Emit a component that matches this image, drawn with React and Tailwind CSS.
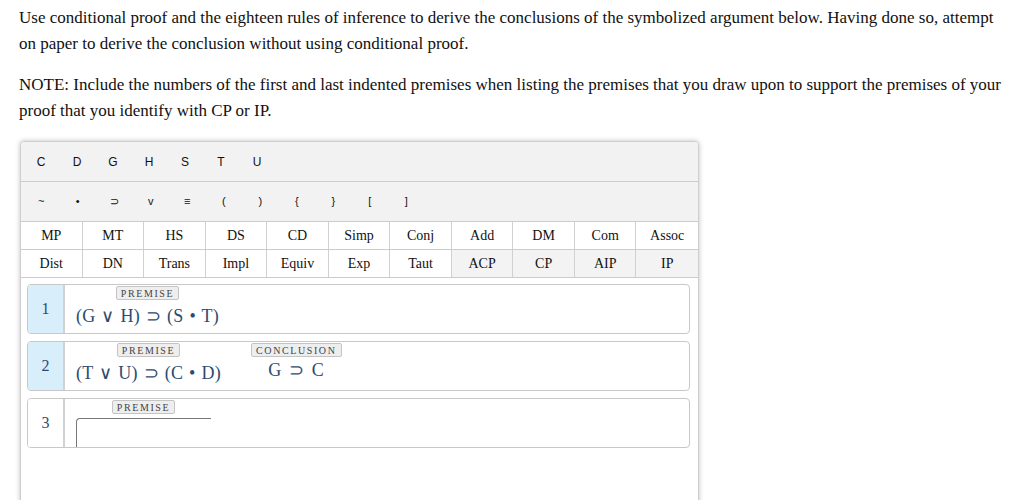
const vars = ['C', 'D', 'G', 'H', 'S', 'T', 'U'];
const symbols = ['~', '•', '⊃', 'v', '≡', '(', ')', '{', '}', '[', ']'];
const rules1 = ['MP', 'MT', 'HS', 'DS', 'CD', 'Simp', 'Conj', 'Add', 'DM', 'Com', 'Assoc'];
const rules2 = ['Dist', 'DN', 'Trans', 'Impl', 'Equiv', 'Exp', 'Taut', 'ACP', 'CP', 'AIP', 'IP'];
const shaded = ['ACP', 'CP', 'AIP', 'IP'];

const serif = { fontFamily: '"Liberation Serif", "Times New Roman", serif' };

function Label({ children }) {
    return (
        <div className="px-[4px] h-[14px] leading-[13px] text-[10px] tracking-[1.6px] text-[#444] bg-[#eeeeee] border border-[#c4c4c4] rounded-[2px] font-['Liberation_Serif',serif]">
            {children}
        </div>
    );
}

function ProofLine({ num, active, children }) {
    return (
        <div className="flex h-[50px] border border-[#c8c8c8] rounded-[4px] overflow-hidden">
            <div
                className={`w-[37px] shrink-0 flex items-center justify-center border-r-2 border-[#d2d2d2] text-[16px] text-[#2d4b6e] font-['Liberation_Serif',serif] ${active ? 'bg-[#d9eefb]' : 'bg-white'}`}
            >
                {num}
            </div>
            <div className="flex pl-[11px] pt-[1px] gap-[30px]">{children}</div>
        </div>
    );
}

function Formula({ label, text }) {
    return (
        <div className="flex flex-col items-center">
            <Label>{label}</Label>
            <div className="mt-[6px] text-[18px] leading-[20px] tracking-[0.3px] [word-spacing:1px] text-[#2d4b6e] font-['Liberation_Serif',serif] whitespace-pre">
                {text}
            </div>
        </div>
    );
}

export default function App() {
    return (
        <div className="w-[1024px] h-[500px] overflow-hidden bg-white">
            <div className="px-[19px] pt-[5px] text-[17px] leading-[26px] text-[#111]" style={serif}>
                <p>
                    Use conditional proof and the eighteen rules of inference to derive the conclusions of the symbolized argument below. Having done so, attempt on paper to derive the conclusion without using conditional proof.
                </p>
                <p className="mt-[15px]">
                    NOTE: Include the numbers of the first and last indented premises when listing the premises that you draw upon to support the premises of your proof that you identify with CP or IP.
                </p>
            </div>

            <div className="ml-[20px] mt-[17px] w-[679px] h-[400px] border border-[#cfcfcf] rounded-t-[4px] bg-white shadow-[0_0_5px_rgba(0,0,0,0.25)]">
                <div className="flex h-[40px] items-center pl-[2px] bg-[#f2f2f2] border-b border-[#cccccc] rounded-t-[4px] font-['Liberation_Sans',Arial,sans-serif] text-[12px] text-[#111]">
                    {vars.map((v) => (
                        <div key={v} className="w-[36px] text-center">{v}</div>
                    ))}
                </div>
                <div className="flex h-[40px] items-center pl-[2px] bg-[#f2f2f2] border-b border-[#cccccc] font-['Liberation_Sans',Arial,sans-serif] text-[11px] text-[#111]">
                    {symbols.map((s, i) => (
                        <div key={i} className="w-[36.5px] text-center">{s}</div>
                    ))}
                </div>
                {[rules1, rules2].map((row, r) => (
                    <div key={r} className="grid grid-cols-11 h-[28px] border-b border-[#cccccc] text-[14px] text-[#111]" style={serif}>
                        {row.map((name, i) => (
                            <div
                                key={name}
                                className={`flex items-center justify-center ${i < 10 ? 'border-r border-[#d0d0d0]' : ''} ${shaded.includes(name) ? 'bg-[#f3f3f3]' : 'bg-white'}`}
                            >
                                {name}
                            </div>
                        ))}
                    </div>
                ))}

                <div className="flex flex-col gap-[7px] pt-[6px] pl-[6px] w-[669px]">
                    <ProofLine num="1" active>
                        <Formula label="PREMISE" text="(G ∨ H) ⊃ (S • T)" />
                    </ProofLine>
                    <ProofLine num="2" active>
                        <Formula label="PREMISE" text="(T ∨ U) ⊃ (C • D)" />
                        <div className="flex flex-col items-center">
                            <Label>CONCLUSION</Label>
                            <div className="mt-[3px] text-[18px] leading-[20px] tracking-[0.6px] [word-spacing:2px] text-[#2d4b6e] font-['Liberation_Serif',serif]">G ⊃ C</div>
                        </div>
                    </ProofLine>
                    <ProofLine num="3">
                        <div className="flex flex-col items-center">
                            <Label>PREMISE</Label>
                            <div className="mt-[4px] w-[135px] h-[32px] border-t border-l border-[#777] rounded-tl-[4px]" />
                        </div>
                    </ProofLine>
                </div>
            </div>
        </div>
    );
}
